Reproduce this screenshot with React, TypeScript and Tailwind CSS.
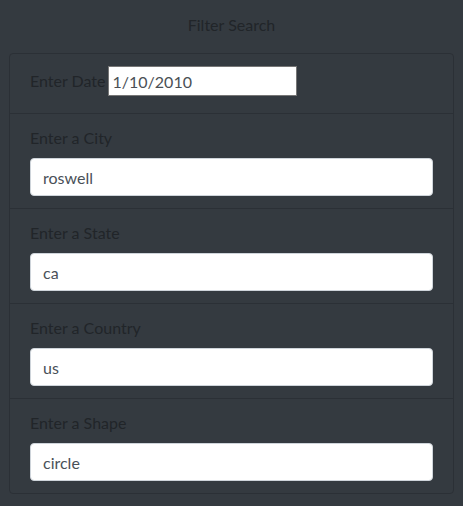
const fields = [
  { label: "Enter a City", value: "roswell" },
  { label: "Enter a State", value: "ca" },
  { label: "Enter a Country", value: "us" },
  { label: "Enter a Shape", value: "circle" },
];

export default function App() {
  return (
    <div
      className="min-h-screen bg-[#343a40] px-[9px] pb-[13px] text-[#212529]"
      style={{ fontFamily: 'Lato, "Open Sans", sans-serif' }}
    >
      <h5 className="pt-[13px] mb-4 text-center text-base leading-6">Filter Search</h5>
      <ul className="rounded border border-[#2b3036]">
        <li className="flex items-center px-5 pt-[12px] pb-[17px] text-base">
          <label className="mr-[2px]">Enter Date</label>
          <input
            type="text"
            defaultValue="1/10/2010"
            className="h-[30px] w-[189px] border border-[#767676] bg-white px-1 text-base text-[#4a4f55] outline-none"
          />
        </li>
        {fields.map((f) => (
          <li key={f.label} className="border-t border-[#2b3036] px-5 py-[12px]">
            <label className="mb-2 block text-base leading-6">{f.label}</label>
            <input
              type="text"
              defaultValue={f.value}
              className="block h-[38px] w-full rounded border border-[#ced4da] bg-white px-3 text-base text-[#495057] outline-none"
            />
          </li>
        ))}
      </ul>
    </div>
  );
}
